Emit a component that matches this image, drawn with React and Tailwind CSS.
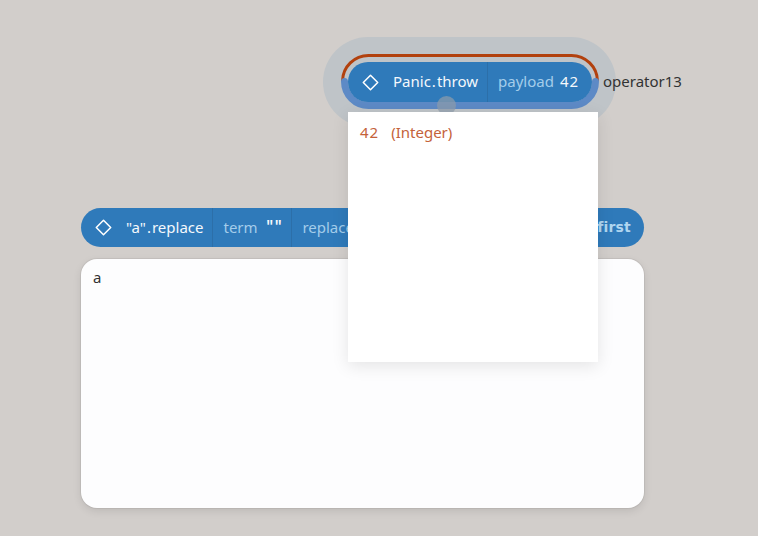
const sans = "font-['Noto_Sans',sans-serif]";

function DiamondIcon({ className }) {
  return (
    <svg viewBox="0 0 16 16" className={className} fill="none" stroke="white" strokeWidth="1.4">
      <path d="M8 1.2 14.8 8 8 14.8 1.2 8Z" strokeLinejoin="round" />
    </svg>
  );
}

function Param({ name, value, valueClass = "" }) {
  return (
    <div className="flex h-full items-center gap-[9px] border-l border-[#2c6fa9] pb-[1px] pl-[10px] pr-[10px]">
      <span className="text-[#a4cdea]">{name}</span>
      <span className={`text-[#f4f8fc] ${valueClass}`}>{value}</span>
    </div>
  );
}

function OperatorBar({ name, method, children, className = "" }) {
  return (
    <div className={`flex items-center overflow-hidden rounded-full bg-[#2f7aba] text-[15px] text-[#f4f8fc] ${className}`}>
      <div className="flex h-full items-center pl-[14px] pr-[9px]">
        <DiamondIcon className="mr-[14px] h-[17px] w-[17px]" />
        <span className="pb-[1px]">
          {name}
          <span className="mx-[1px]">.</span>
          {method}
        </span>
      </div>
      {children}
    </div>
  );
}

export default function App() {
  return (
    <div className={`relative h-[536px] w-[758px] overflow-hidden bg-[#d2cecb] ${sans}`}>
      {/* node behind */}
      <div className="absolute left-[81px] top-[208px] w-[563px]">
        <OperatorBar name={'"a"'} method="replace" className="h-[39px]">
          <Param name="term" value={'""'} valueClass="-ml-[1px] -mr-[1px] font-['Liberation_Mono',monospace] text-[14px] font-bold" />
          <Param name="replacement" value={'""'} />
          <div className="ml-auto pr-[13px] font-['DejaVu_Sans',sans-serif] text-[14px] font-bold tracking-[0.2px] text-[#b0d6f0]">.first</div>
        </OperatorBar>
        <div className="mt-[12px] h-[249px] rounded-[16px] bg-[#fdfdfe] px-[12px] py-[7px] text-[15px] text-[#333] shadow-[0_0_0_1px_rgba(0,0,0,0.05),0_3px_8px_rgba(0,0,0,0.1)]">
          a
        </div>
      </div>

      {/* selected node */}
      <div className="absolute left-[323px] top-[37px] h-[90px] w-[293px] rounded-full bg-[#bfc4c8]" />
      <svg className="absolute left-[341px] top-[54px]" width="258" height="55" fill="none">
        <path d="M1.5 27A26 26 0 0 1 27.5 1.5H230.5A26 26 0 0 1 256.5 27" stroke="#b2410e" strokeWidth="3" />
        <path d="M3.5 27.5A24 24 0 0 0 27.5 51.5H230.5A24 24 0 0 0 254.5 27.5" stroke="#5d8ac6" strokeWidth="7" strokeLinecap="round" />
      </svg>
      <div className="absolute left-[348px] top-[62px] w-[244px]">
        <OperatorBar name="Panic" method="throw" className="h-[40px]">
          <Param name="payload" value="42" valueClass="-ml-[3px] tracking-[1px]" />
        </OperatorBar>
      </div>
      <div className="absolute left-[603px] top-[70px] text-[15px] text-[#333]">operator13</div>

      <div className="absolute left-[437px] top-[96px] h-[19px] w-[19px] rounded-full bg-[#8f9dab]/70" />
      <div className="absolute left-[348px] top-[112px] h-[250px] w-[250px] bg-white px-[12px] py-[9px] text-[15px] text-[#c4623a] shadow-[0_4px_16px_rgba(0,0,0,0.1)]">
        <span className="mr-[12px] tracking-[1px]">42</span>
        <span>(Integer)</span>
      </div>
    </div>
  );
}
